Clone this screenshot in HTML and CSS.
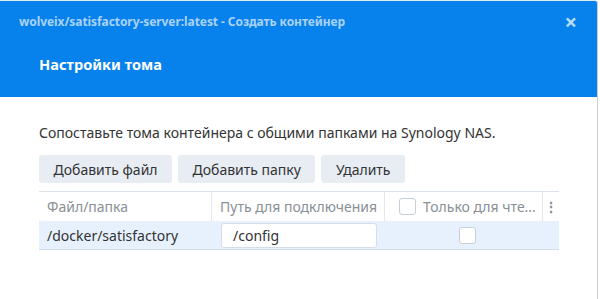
FILE: index.html
```html
<html lang="ru">
<head>
    <meta charset="UTF-8">
    <meta name="viewport" content="width=device-width, initial-scale=1.0">
    <title>Создать контейнер</title>
    <link rel="stylesheet" href="styles.css">
</head>
<body>
    <div class="dialog">
        <div class="header">
            <div class="titlebar">
                <span class="title">wolveix/satisfactory-server:latest - Создать контейнер</span>
                <span class="closebtn">&times;</span>
            </div>
            <h1>Настройки тома</h1>
        </div>
        <div class="content">
            <p class="desc">Сопоставьте тома контейнера с общими папками на Synology NAS.</p>
            <div class="toolbar">
                <button class="btn">Добавить файл</button>
                <button class="btn">Добавить папку</button>
                <button class="btn">Удалить</button>
            </div>
            <div class="grid">
                <div class="row head">
                    <div class="cell c1">Файл/папка</div>
                    <div class="cell c2">Путь для подключения</div>
                    <div class="cell c3"><span class="check"></span>Только для чте...</div>
                    <div class="cell c4">&#8942;</div>
                </div>
                <div class="row data">
                    <div class="cell c1">/docker/satisfactory</div>
                    <div class="cell c2"><div class="field">/config</div></div>
                    <div class="cell c3 center"><span class="check"></span></div>
                    <div class="cell c4"></div>
                </div>
            </div>
        </div>
    </div>
</body>
</html>
```

FILE: styles.css
```css
* {
  box-sizing: border-box;
}

body {
  margin: 0;
  background: #fff;
  font-family: "Noto Sans", "Open Sans", sans-serif;
  color: #333;
}

.dialog {
  width: 598px;
  height: 299px;
  border-top: 1px solid #e3e8ee;
  border-right: 1px solid #c9ced4;
  border-top-right-radius: 3px;
  overflow: hidden;
}

.header {
  background-color: #0781eb;
  height: 96px;
}

.titlebar {
  display: flex;
  align-items: center;
  justify-content: space-between;
  height: 40px;
  padding: 0 20px 0 19px;
}

.title {
  font-size: 12px;
  font-weight: bold;
  letter-spacing: -0.07px;
  color: #a9d3fa;
}

.closebtn {
  font-size: 22px;
  font-weight: bold;
  color: #b7dcfc;
}

h1 {
  margin: 0;
  padding: 13px 39px 0;
  font-size: 14.6px;
  line-height: 20px;
  font-weight: bold;
  color: #fff;
}

.content {
  padding: 26px 39px 0;
}

.desc {
  margin: 0;
  font-size: 14px;
  line-height: 20px;
}

.toolbar {
  display: flex;
  gap: 6px;
  margin-top: 12px;
}

.btn {
  border: none;
  border-radius: 3px;
  background-color: #e8edf3;
  color: #333;
  height: 28px;
  padding: 0 14.5px;
  font-family: inherit;
  font-size: 14px;
}

.grid {
  width: 520px;
  margin-top: 8px;
  border-top: 1px solid #dde3ea;
  font-size: 14px;
}

.row {
  display: flex;
  height: 29px;
}

.row.data {
  background-color: #e6f1fd;
  border-bottom: 1px solid #d3deea;
}

.cell {
  display: flex;
  align-items: center;
  padding: 0 8px;
  white-space: nowrap;
  overflow: hidden;
}

.head .cell {
  color: #8a8f95;
  border-right: 1px solid #e3e8ee;
}

.head .c4 {
  border-right: none;
  justify-content: center;
  padding: 0;
  font-weight: bold;
}

.c1 { width: 173px; }
.c2 { width: 173px; }
.c3 { width: 158px; padding-left: 14px; }
.c4 { width: 16px; }

.center {
  justify-content: center;
}

.field {
  width: 157px;
  height: 25px;
  margin-left: 1px;
  background: #fff;
  border: 1px solid #d3deea;
  border-radius: 3px;
  padding: 0 11px;
  line-height: 23px;
  color: #333;
}

.check {
  display: inline-block;
  flex: none;
  width: 17px;
  height: 17px;
  border: 1px solid #c7ced6;
  border-radius: 3px;
  background: #fff;
  margin-right: 7px;
}

.center .check {
  margin-right: 0;
  margin-left: 1px;
}
```
